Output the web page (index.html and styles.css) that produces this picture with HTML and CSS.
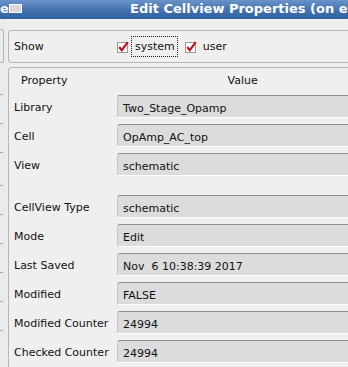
FILE: index.html
```html
<!DOCTYPE html>
<html lang="en">
<head>
    <meta charset="UTF-8">
    <meta name="viewport" content="width=device-width, initial-scale=1.0">
    <title>Edit Cellview Properties</title>
    <link rel="stylesheet" href="styles.css">
</head>
<body>
    <!-- Title bar -->
    <div class="titlebar">
        <span class="behind-title">e</span>
        <span class="menu-icon"></span>
        <span class="title">Edit Cellview Properties (on e</span>
    </div>

    <div class="main">
        <!-- edge of the window underneath -->
        <div class="edge">
            <div class="edge-group"></div>
            <div class="edge-mark first"></div>
            <div class="edge-mark"></div>
            <div class="edge-mark"></div>
            <div class="edge-mark wide"></div>
            <div class="edge-mark"></div>
            <div class="edge-mark"></div>
            <div class="edge-mark"></div>
            <div class="edge-mark"></div>
            <div class="edge-mark"></div>
        </div>

        <div class="dialog">
            <!-- Show -->
            <div class="show-box">
                <span class="label">Show</span>
                <span class="check">
                    <svg width="12" height="12" viewBox="0 0 12 12">
                        <rect x="0.5" y="1.5" width="10" height="10" fill="#fff" stroke="#9a9a9a"/>
                        <path d="M2.2 6 L4.8 9.2 L10.8 1.2" fill="none" stroke="#c3151c" stroke-width="2.2"/>
                    </svg>
                </span>
                <span class="check-text focus">system</span>
                <span class="check second">
                    <svg width="12" height="12" viewBox="0 0 12 12">
                        <rect x="0.5" y="1.5" width="10" height="10" fill="#fff" stroke="#9a9a9a"/>
                        <path d="M2.2 6 L4.8 9.2 L10.8 1.2" fill="none" stroke="#c3151c" stroke-width="2.2"/>
                    </svg>
                </span>
                <span class="check-text">user</span>
            </div>

            <!-- Properties -->
            <div class="table-box">
                <div class="table-head">
                    <span class="head-prop">Property</span>
                    <span class="head-value">Value</span>
                </div>
                <div class="row"><span class="label">Library</span><div class="field">Two_Stage_Opamp</div></div>
                <div class="row"><span class="label">Cell</span><div class="field">OpAmp_AC_top</div></div>
                <div class="row"><span class="label">View</span><div class="field">schematic</div></div>
                <div class="spacer"></div>
                <div class="row"><span class="label">CellView Type</span><div class="field">schematic</div></div>
                <div class="row"><span class="label">Mode</span><div class="field">Edit</div></div>
                <div class="row"><span class="label">Last Saved</span><div class="field">Nov&nbsp;&nbsp;6 10:38:39 2017</div></div>
                <div class="row"><span class="label">Modified</span><div class="field">FALSE</div></div>
                <div class="row"><span class="label">Modified Counter</span><div class="field">24994</div></div>
                <div class="row"><span class="label">Checked Counter</span><div class="field">24994</div></div>
            </div>
        </div>
    </div>
</body>
</html>
```

FILE: styles.css
```css
html, body {
    margin: 0;
    padding: 0;
}
body {
    width: 348px;
    height: 367px;
    overflow: hidden;
    background-color: #efefef;
    font-family: "DejaVu Sans", sans-serif;
    font-size: 11px;
    line-height: 13px;
    color: #111111;
}
.titlebar {
    height: 19px;
    display: flex;
    align-items: flex-start;
    background: linear-gradient(#6a93c9, #3f6ead 60%, #32619f);
    color: #ffffff;
    font-weight: bold;
    font-size: 13px;
    line-height: 16px;
    white-space: nowrap;
    overflow: hidden;
}
.behind-title {
    width: 9px;
    padding-top: 1px;
}
.menu-icon {
    width: 11px;
    height: 7px;
    margin-top: 4px;
    background-color: #d8d8d8;
    border: 1px solid #ffffff;
}
.title {
    margin-left: 108px;
    padding-top: 1px;
}
.main {
    display: flex;
    height: 348px;
    overflow: hidden;
}
.edge {
    width: 7px;
    flex-shrink: 0;
    padding-top: 10px;
    background-color: #ebebeb;
}
.edge-group {
    width: 3px;
    height: 32px;
    border: 1px solid #b4b4b4;
    border-left: none;
    border-radius: 0 3px 3px 0;
}
.edge-mark {
    width: 3px;
    height: 0;
    border-top: 1px solid #a8a8a8;
    margin-top: 28px;
}
.edge-mark.first {
    margin-top: 31px;
}
.edge-mark.wide {
    margin-top: 32px;
}
.dialog {
    flex: 1;
    min-width: 0;
    padding-top: 11px;
    margin-left: 1px;
}
.show-box {
    height: 33px;
    box-sizing: border-box;
    display: flex;
    align-items: center;
    padding-left: 5px;
    border: 1px solid #b6b6b6;
    border-right: none;
    border-radius: 4px 0 0 4px;
}
.label {
    width: 103px;
    flex-shrink: 0;
    white-space: nowrap;
}
.row .label {
    padding-top: 2px;
}
.check {
    display: flex;
    width: 12px;
    height: 12px;
    margin-top: 1px;
}
.check.second {
    margin-left: 7px;
}
.check-text {
    margin-left: 6px;
}
.check-text.focus {
    margin-left: 2px;
    padding: 3px 2px 3px 3px;
    border: 1px dotted #222222;
}
.table-box {
    margin-top: 4px;
    height: 310px;
    border: 1px solid #b6b6b6;
    border-right: none;
    border-bottom: none;
    border-radius: 4px 0 0 0;
    padding-left: 5px;
}
.table-head {
    height: 27px;
    box-sizing: border-box;
    padding-top: 6px;
    display: flex;
}
.head-prop {
    margin-left: 7px;
}
.head-value {
    margin-left: 160px;
}
.row {
    display: flex;
    align-items: center;
    margin-bottom: 6px;
}
.field {
    flex: 1;
    height: 23px;
    box-sizing: border-box;
    padding: 6px 0 0 5px;
    background-color: #dcdcdc;
    border-top: 1px solid #8e8e8e;
    border-left: 1px solid #c6c6c6;
    border-bottom: 1px solid #ffffff;
    border-radius: 3px 0 0 3px;
    white-space: nowrap;
}
.spacer {
    height: 13px;
}
```
